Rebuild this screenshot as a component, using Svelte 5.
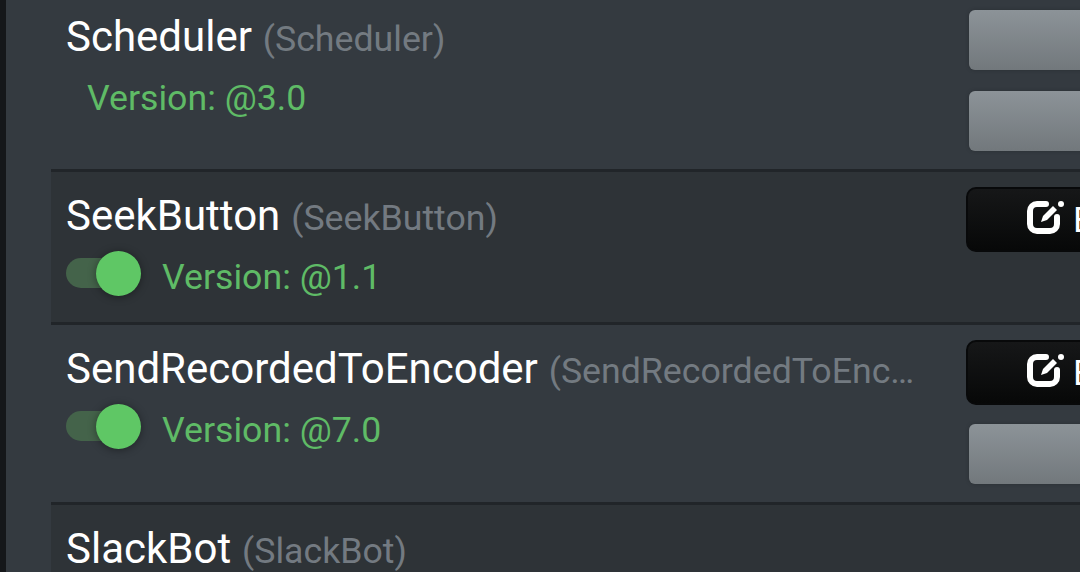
<script>
  const plugins = [
    { name: "Scheduler", version: "3.0", toggle: false, edit: false, ghosts: 2 },
    { name: "SeekButton", version: "1.1", toggle: true, edit: true, ghosts: 0 },
    { name: "SendRecordedToEncoder", version: "7.0", toggle: true, edit: true, ghosts: 1 },
    { name: "SlackBot", version: "", toggle: false, edit: false, ghosts: 0 }
  ];
</script>

<div class="page">
  <div class="rail"></div>
  <div class="gutter"></div>
  <div class="list">
    {#each plugins as p}
      <div class="row">
        <div class="info">
          <div class="title">
            <span class="name">{p.name}</span>
            <span class="sub">({p.name})</span>
          </div>
          {#if p.version}
            <div class="meta" class:plain={!p.toggle}>
              {#if p.toggle}
                <span class="switch"><span class="knob"></span></span>
              {/if}
              <span class="version">Version: @{p.version}</span>
            </div>
          {/if}
        </div>
        <div class="actions">
          {#if p.edit}
            <button class="btn edit">
              <svg class="icon" viewBox="0 0 37 36" width="37" height="36">
                <path d="M19 4H10a7 7 0 0 0-7 7v13a7 7 0 0 0 7 7h13a7 7 0 0 0 7-7v-7" fill="none" stroke="#fff" stroke-width="6" stroke-linecap="round"/>
                <path d="M14 22l2-6L26 6l4 4-10 10z" fill="#fff"/>
                <circle cx="34" cy="4" r="3" fill="#fff"/>
              </svg>
              Edit
            </button>
          {/if}
          {#each Array(p.ghosts) as _}
            <button class="btn ghost" aria-label="disabled"></button>
          {/each}
        </div>
      </div>
    {/each}
  </div>
</div>

<style>
  :global(body) {
    margin: 0;
    background: #343a40;
  }
  .page {
    display: flex;
    width: 1080px;
    height: 572px;
    overflow: hidden;
    font-family: Roboto, "Liberation Sans", sans-serif;
  }
  .rail {
    flex: 0 0 6px;
    background: #15171a;
  }
  .gutter {
    flex: 0 0 45px;
    background: #343a40;
  }
  .list {
    flex: 0 0 1029px;
    min-width: 0;
    margin-top: -7px;
  }
  .row {
    display: flex;
    padding: 15px 0 16px 15px;
    border-bottom: 3px solid #212529;
  }
  .row:nth-child(odd) {
    background: #343a40;
  }
  .row:nth-child(even) {
    background: #2e3337;
  }
  .row:last-child {
    border-bottom: 0;
  }
  .info {
    flex: 0 0 854px;
    min-width: 0;
    padding: 5px 0;
  }
  .title {
    white-space: nowrap;
    overflow: hidden;
    text-overflow: ellipsis;
    color: #737a81;
    font-size: 35.7px;
    line-height: 48px;
  }
  .name {
    color: #fff;
    font-size: 42px;
    margin-right: 2px;
  }
  .meta {
    display: flex;
    align-items: center;
    height: 48px;
    margin-top: 11px;
    font-size: 35.7px;
  }
  .meta.plain {
    padding-left: 21px;
  }
  .switch {
    position: relative;
    display: block;
    width: 65px;
    height: 30px;
    margin-right: 31px;
    margin-bottom: 8px;
    border-radius: 15px;
    background: #44634a;
  }
  .knob {
    position: absolute;
    top: -7.5px;
    right: -10px;
    width: 45px;
    height: 45px;
    border-radius: 50%;
    background: #5fc765;
    box-shadow: 0 1px 8px rgba(0, 0, 0, 0.4);
  }
  .version {
    color: #5fbb66;
  }
  .actions {
    display: flex;
    flex-direction: column;
    flex: 0 0 200px;
    margin-left: 46px;
    gap: 17px;
  }
  .btn {
    display: flex;
    align-items: center;
    box-sizing: border-box;
    width: 200px;
    border: 0;
    padding: 0;
    font: inherit;
    font-size: 35.7px;
  }
  .edit {
    height: 65px;
    padding-left: 59px;
    gap: 9px;
    color: #fff;
    border-radius: 10px;
    border: 2px solid #08090a;
    background: linear-gradient(#161718, #070808);
  }
  .ghost {
    width: 197px;
    margin: 2px 0 2px 3px;
    height: 60px;
    border-radius: 6px;
    background: linear-gradient(#8c9398, #72787c);
    box-shadow: 0 0 4px rgba(0, 0, 0, 0.2);
  }
  .icon {
    flex: none;
    margin-bottom: 3px;
  }
</style>
